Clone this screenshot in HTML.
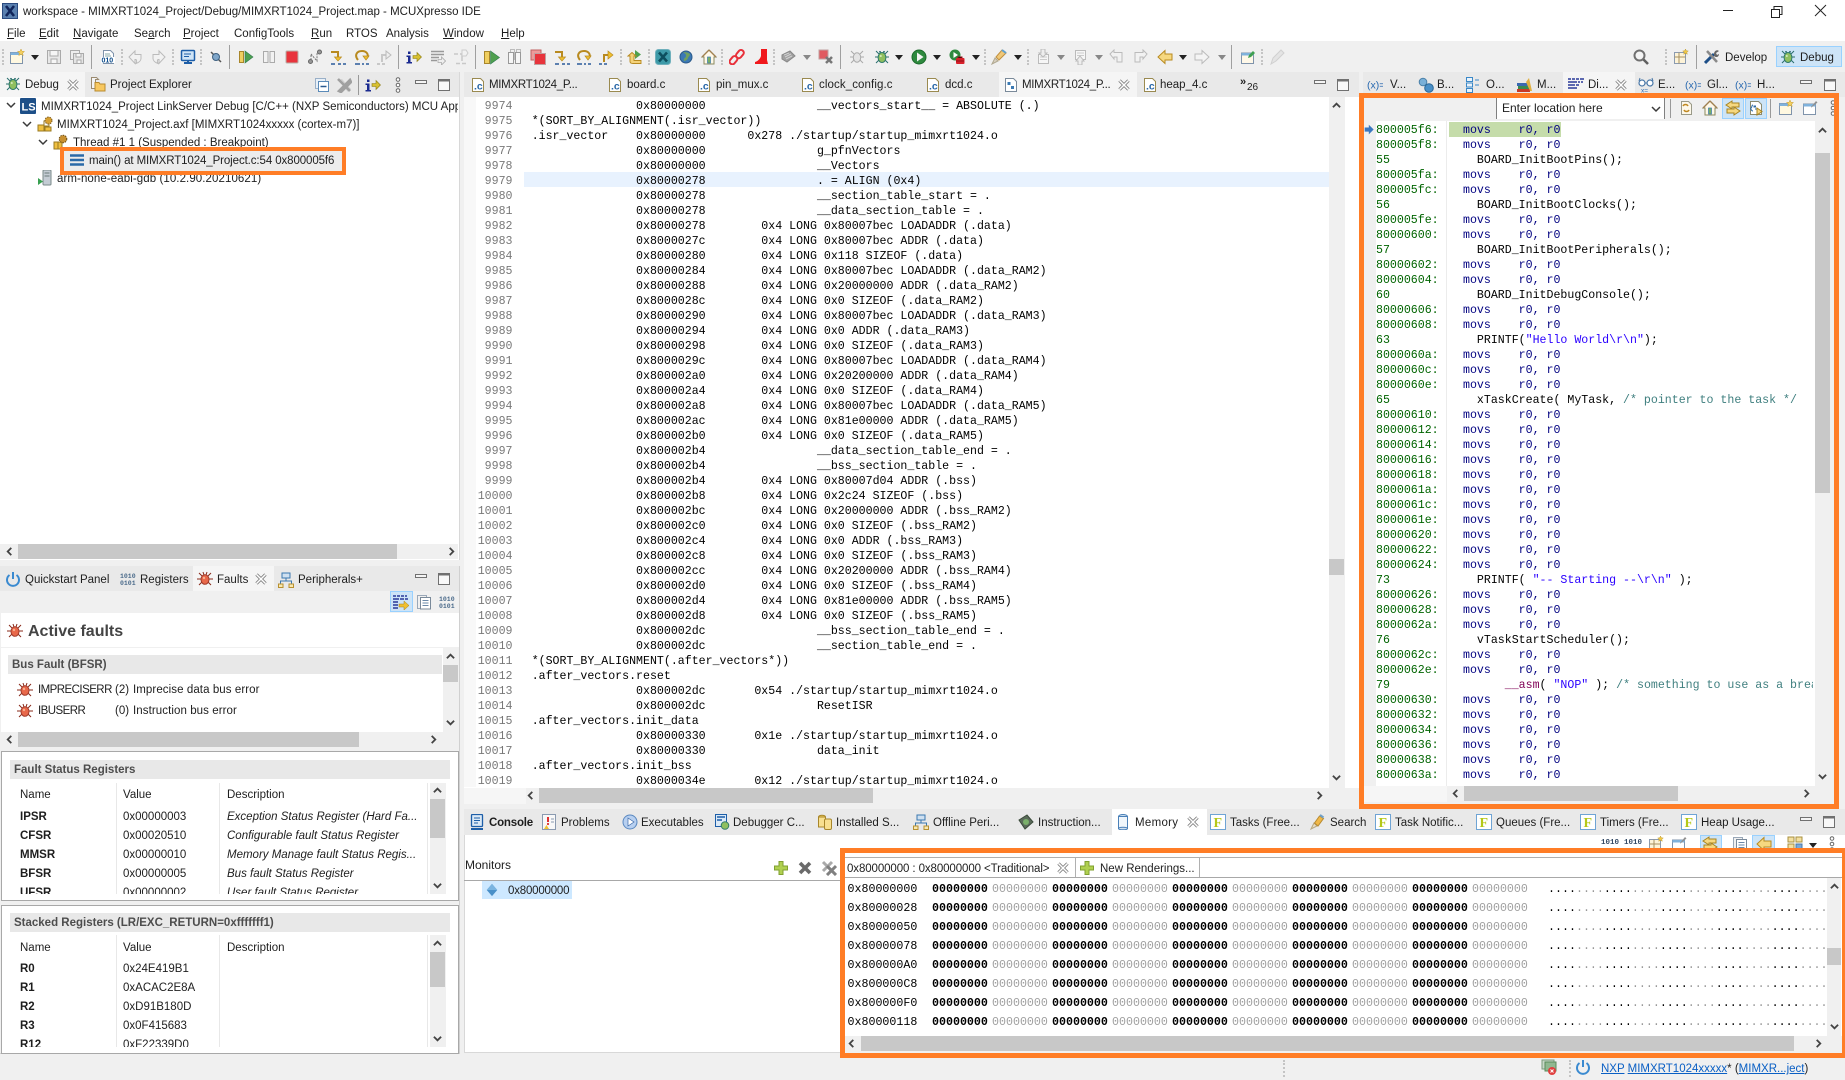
<!DOCTYPE html>
<html><head><meta charset="utf-8"><title>MCUXpresso IDE</title>
<style>
html,body{margin:0;padding:0;background:#f0f0f0}
#r{position:relative;width:1845px;height:1080px;overflow:hidden;background:#f0f0f0;font:11.5px/14px "Liberation Sans",sans-serif;color:#1e1e1e}
.a{position:absolute}
.t{position:absolute;white-space:pre;line-height:14px;margin-top:1px}
.i{position:absolute;width:16px;height:16px;overflow:visible}
.tb .i{top:49px}
.g{position:absolute;top:49px;width:0;height:16px;border-left:2px dotted #c4c4c4}
.s{position:absolute;top:45px;width:1px;height:24px;background:#a0a0a0}
.th{position:absolute;background:#c8c8c8}
pre{position:absolute;margin:0;font:11.6px/15px "Liberation Mono",monospace;white-space:pre}
.b{font-weight:bold}
.hd{position:absolute;background:#e8e8e8;color:#4d4d4d;font-weight:bold;padding:1px 0 0 4px;box-sizing:border-box;line-height:19px;white-space:pre}
.o{position:absolute;border:5px solid #ff7d26;box-sizing:border-box;z-index:20}
.mr{position:absolute;left:847.5px;height:15px;display:flex;font:11.65px/15px "Liberation Mono",monospace;white-space:pre;color:#000}
.mr i{font-style:normal;width:84.5px}
.mr b{width:60px;font-weight:bold;color:#000}
.mr u{width:60px;text-decoration:none;color:#a0a0a0}
.ti{font-style:italic}
svg text{font-family:"Liberation Sans",sans-serif}
</style></head><body><div id="r">
<svg width="0" height="0" style="position:absolute"><defs>
<symbol id="new" viewBox="0 0 16 16"><rect x="1.500" y="3.500" width="12" height="11" fill="#fff8e0" stroke="#7f93ab"/><rect x="1.500" y="3.500" width="12" height="2.500" fill="#7fb2dc"/><path d="M12 0l1 2.300 2.500.2-1.900 1.600.6 2.400L12 5.200 9.800 6.500l.6-2.400L8.500 2.500l2.500-.2z" fill="#f5d060" stroke="#c49a30" stroke-width=".5"/></symbol>
<symbol id="tri" viewBox="0 0 16 16"><path d="M4 6h8l-4 5z" fill="#222"/></symbol>
<symbol id="trig" viewBox="0 0 16 16"><path d="M4 6h8l-4 5z" fill="#888"/></symbol>
<symbol id="save" viewBox="0 0 16 16"><path d="M1.500 1.500h13v13h-13z" fill="#e8e8e8" stroke="#aaa"/><path d="M4 2v5h8V2M5 14v-4h6v4" fill="#f6f6f6" stroke="#aaa"/></symbol>
<symbol id="saveall" viewBox="0 0 16 16"><path d="M1.500 1.500h9v9h-9z" fill="#eee" stroke="#aaa"/><path d="M4.500 4.500h10v10h-10z" fill="#e4e4e4" stroke="#aaa"/><path d="M7 5v3h5V5M8 14v-3h4v3" fill="#f6f6f6" stroke="#aaa"/></symbol>
<symbol id="bin" viewBox="0 0 16 16"><path d="M3.500 1.500h7l3 3v10h-10z" fill="#fff" stroke="#7f93ab"/><path d="M5 5h5M5 7h6" stroke="#8aa" /><rect x="1" y="8" width="14" height="6" fill="#fff"/><text x="1.500" y="13.500" font-size="7" font-weight="bold" fill="#0a4a8a">010</text></symbol>
<symbol id="undo" viewBox="0 0 16 16"><path d="M1 8l6-6v3.500h6v4c0 2-2 4-5 5 1-2 1-3 0-4H7v4z" fill="#f2f2f2" stroke="#bbb"/></symbol>
<symbol id="redo" viewBox="0 0 16 16"><path d="M15 8L9 2v3.500H3v4c0 2 2 4 5 5-1-2-1-3 0-4h1v4z" fill="#f2f2f2" stroke="#bbb"/></symbol>
<symbol id="mon" viewBox="0 0 16 16"><rect x="1.500" y="1.500" width="13" height="10" rx="1" fill="#cfe4f6" stroke="#1d5ea8" stroke-width="1.500"/><path d="M4 5h7M4 7.500h5" stroke="#1d5ea8"/><path d="M4 14h8" stroke="#1d5ea8" stroke-width="2"/><path d="M7 11.500h2v2H7z" fill="#1d5ea8"/></symbol>
<symbol id="wr" viewBox="0 0 16 16"><path d="M3 3l10 10" stroke="#555" stroke-width="1.500"/><circle cx="8" cy="8" r="3.500" fill="#7fa6c9" stroke="#3c5f80"/></symbol>
<symbol id="res" viewBox="0 0 16 16"><rect x="1.500" y="2.500" width="4" height="11" fill="#f0cf60" stroke="#a8862a"/><path d="M7 2l8 6-8 6z" fill="#4fa04f" stroke="#2f7a4f" stroke-width=".6"/></symbol>
<symbol id="pau" viewBox="0 0 16 16"><rect x="2.500" y="2.500" width="4.500" height="11" fill="#f2f2f2" stroke="#aaa"/><rect x="9" y="2.500" width="4.500" height="11" fill="#f2f2f2" stroke="#aaa"/></symbol>
<symbol id="stp" viewBox="0 0 16 16"><rect x="2" y="2" width="12" height="12" rx="1" fill="#e8343c" stroke="#b8b0a8"/></symbol>
<symbol id="dis" viewBox="0 0 16 16"><circle cx="3.500" cy="12.500" r="2" fill="#999" stroke="#666"/><circle cx="12.500" cy="3" r="2" fill="#999" stroke="#666"/><path d="M4 11V5l6 7V4" fill="none" stroke="#777" stroke-dasharray="2 1"/></symbol>
<symbol id="into" viewBox="0 0 16 16"><path d="M1 3h7v7" fill="none" stroke="#b88a20" stroke-width="2"/><path d="M4.500 8l3.500 4 3.500-4z" fill="#f0c030" stroke="#b88a20" stroke-width=".7"/><path d="M1 15h4M8 15h3M13 15h3" stroke="#2a5a9a" stroke-width="1.500"/></symbol>
<symbol id="over" viewBox="0 0 16 16"><path d="M4 11C0 6 3 2 8 2s7 4 5 7" fill="none" stroke="#b88a20" stroke-width="2"/><path d="M9 7h6l-3 4z" fill="#f0c030" stroke="#b88a20" stroke-width=".7"/><path d="M1 15h5M8 15h2M12 15h3" stroke="#2a5a9a" stroke-width="1.500"/></symbol>
<symbol id="ret" viewBox="0 0 16 16"><path d="M5 13V6h5" fill="none" stroke="#c8c8c8" stroke-width="2"/><path d="M9 2l5 4-5 4z" fill="#eee" stroke="#bbb"/><path d="M0 15h3M5 15h3" stroke="#bbb" stroke-width="1.500"/></symbol>
<symbol id="ret2" viewBox="0 0 16 16"><path d="M5 13V6h5" fill="none" stroke="#b88a20" stroke-width="2"/><path d="M9 2l5 4-5 4z" fill="#f0c030" stroke="#b88a20" stroke-width=".7"/><path d="M0 15h3M5 15h3" stroke="#2a5a9a" stroke-width="1.500"/></symbol>
<symbol id="ia" viewBox="0 0 16 16"><path d="M2 2.500h2.500V5H2zM.5 6.500h4V13H6v1.500H.5V13H2V8H.5z" fill="#1a2a90"/><path d="M7 6.500h4V3.500L15.500 8 11 12.500v-3H7z" fill="#d8c030" stroke="#8a7a10" stroke-width=".6"/></symbol>
<symbol id="lin" viewBox="0 0 16 16"><path d="M1 2.500h13M1 5.500h13M1 8.500h8M1 11.500h6" stroke="#999" stroke-width="1.500"/><path d="M8 10.500h3.500V8l4 4-4 4v-2.500H8z" fill="#eee" stroke="#aaa" stroke-width=".8"/></symbol>
<symbol id="drop" viewBox="0 0 16 16"><path d="M1 5h4M7 5h2v7M3 14.500h4M9 14.500h4" stroke="#c8c8c8" stroke-width="1.500" fill="none"/><path d="M9 1h4l2 3-2 3H9z" fill="#f2f2f2" stroke="#ccc"/></symbol>
<symbol id="resa" viewBox="0 0 16 16"><rect x=".5" y="2.500" width="5" height="12" fill="#f0cf60" stroke="#a8862a"/><path d="M6.500 2l9 6.500-9 6.500z" fill="#4fa04f" stroke="#2f7a4f" stroke-width=".6"/></symbol>
<symbol id="paua" viewBox="0 0 16 16"><rect x="3.500" y=".5" width="4" height="10" fill="#eee" stroke="#bbb"/><rect x="9.500" y=".5" width="4" height="10" fill="#eee" stroke="#bbb"/><rect x="1.500" y="3.500" width="5" height="11" fill="#f6f6f6" stroke="#999"/><rect x="8.500" y="3.500" width="5" height="11" fill="#f6f6f6" stroke="#999"/></symbol>
<symbol id="stpa" viewBox="0 0 16 16"><rect x="1" y="1" width="10" height="10" fill="#ee9a9a" stroke="#c06060"/><rect x="4.500" y="4.500" width="11" height="11" fill="#e8343c" stroke="#c0a0a0"/></symbol>
<symbol id="lres" viewBox="0 0 16 16"><path d="M8 1l6 4.500-6 4.500z" fill="#4fa04f"/><path d="M3 7v5.500c0 1.500 1 2 3 2h8v-3H7V7H9L5 3.500 1 7z" fill="#f4d27a" stroke="#b88a20" stroke-width=".9"/></symbol>
<symbol id="mx" viewBox="0 0 16 16"><rect x=".5" y=".5" width="15" height="15" rx="3" fill="#3d9aa8" stroke="#6fb0bc"/><path d="M4 3.500l8 9M12 3.500l-8 9" stroke="#0d4f5e" stroke-width="2.600"/></symbol>
<symbol id="mxt" viewBox="0 0 16 16"><rect x=".5" y=".5" width="15" height="15" fill="#5a80b0" stroke="#2a4a80"/><path d="M4 3l8 10M12 3L4 13" stroke="#10245a" stroke-width="2.600"/></symbol>
<symbol id="glo" viewBox="0 0 16 16"><circle cx="8" cy="8" r="6" fill="#3c78b4" stroke="#2a5a8a"/><path d="M5 4c2 0 3 1 3 3S5 9 6 12c2 0 4-2 4-3s2-2 2-4c-2-1-5-3-7-1z" fill="#6fa060"/></symbol>
<symbol id="hom" viewBox="0 0 16 16"><path d="M8 1L1 8h2v7h10V8h2z" fill="#fff8e8" stroke="#8a8a60"/><path d="M8 1L1 8M8 1l7 7" stroke="#a08050" stroke-width="1.300"/><rect x="6.500" y="8" width="3" height="6" fill="#7ab060" stroke="#3a7ab4" stroke-width=".7"/></symbol>
<symbol id="lnk" viewBox="0 0 16 16"><g fill="none" stroke="#e8303a" stroke-width="2"><rect x="8" y="0" width="5.500" height="9" rx="2.700" transform="rotate(40 10 5)"/><rect x="2" y="7" width="5.500" height="9" rx="2.700" transform="rotate(40 5 11)"/></g></symbol>
<symbol id="boot" viewBox="0 0 16 16"><path d="M8 0h6v11l1 4H2v-2c3-1 5-3 6-6z" fill="#f0181c"/></symbol>
<symbol id="chip" viewBox="0 0 16 16"><path d="M2 6l8-4 5 5-8 6-5-3z" fill="#a0a0a0" stroke="#888"/><path d="M4 6l5-2M5 8l6-3M6 10l6-3" stroke="#d0d0d0"/></symbol>
<symbol id="rx" viewBox="0 0 16 16"><rect x="1" y="1" width="9" height="9" fill="#e05a60" stroke="#c0a0a0"/><path d="M8 8l6 6M14 8l-6 6" stroke="#777" stroke-width="2.500"/></symbol>
<symbol id="bugg" viewBox="0 0 16 16"><path d="M2 2l3 3M14 2l-3 3M1 8h3M15 8h-3M2 14l3-3M14 14l-3-3" stroke="#aaa"/><ellipse cx="8" cy="8.500" rx="3.700" ry="4.700" fill="#e4e4e4" stroke="#aaa"/></symbol>
<symbol id="bug" viewBox="0 0 16 16"><path d="M2 2l3 3M14 2l-3 3M1 8h3M15 8h-3M2 14l3-3M14 14l-3-3" stroke="#2a6e6e"/><ellipse cx="8" cy="8.500" rx="3.900" ry="5" fill="#8fbf5f" stroke="#2f7a6a"/><circle cx="6.800" cy="7" r="1" fill="#d8ecc0"/><circle cx="6" cy="2.800" r=".9" fill="#2a6e6e"/><circle cx="10" cy="2.800" r=".9" fill="#2a6e6e"/></symbol>
<symbol id="bugr" viewBox="0 0 16 16"><path d="M2 2l3 3M14 2l-3 3M0 8h4M16 8h-4M2 14l3-3M14 14l-3-3M6 1l1 3M10 1L9 4" stroke="#8a2a1a"/><ellipse cx="8" cy="8.500" rx="4" ry="4.800" fill="#e8684a" stroke="#a03a2a"/><circle cx="7" cy="7" r="1.200" fill="#f5b090"/></symbol>
<symbol id="run" viewBox="0 0 16 16"><circle cx="8" cy="8" r="7" fill="#2f8a3f" stroke="#1a6a2a"/><path d="M6 3.500L12.500 8 6 12.500z" fill="#f4f4f4"/></symbol>
<symbol id="runb" viewBox="0 0 16 16"><circle cx="6" cy="6" r="5.500" fill="#2f8a3f"/><path d="M4.500 3L9 6 4.500 9z" fill="#fff"/><rect x="7" y="9" width="8.500" height="6" rx="1" fill="#d8202a"/><path d="M9 9V8h4v1M7 12h8" stroke="#901018"/></symbol>
<symbol id="bru" viewBox="0 0 16 16"><path d="M1 15l3-6 3 3z" fill="#d8d0c0" stroke="#b0a890"/><path d="M5 8l6-7 4 3-7 7z" fill="#f0c878" stroke="#c09040"/><path d="M11 1l4 3" stroke="#60a0d0" stroke-width="2"/></symbol>
<symbol id="nv1" viewBox="0 0 16 16"><path d="M3.500 5.500h10v9h-10z" fill="#f6f6f6" stroke="#bbb"/><path d="M5 8h7M5 10.500h7" stroke="#ccc"/><path d="M6 0h4v4h2L8 8 4 4h2z" fill="#eee" stroke="#bbb"/></symbol>
<symbol id="nv2" viewBox="0 0 16 16"><path d="M3.500 1.500h10v9h-10z" fill="#f6f6f6" stroke="#bbb"/><path d="M5 4h7M5 6.500h7" stroke="#ccc"/><path d="M6 16v-4H4l4-5 4 5h-2v4z" fill="#eee" stroke="#bbb"/></symbol>
<symbol id="lbk" viewBox="0 0 16 16"><path d="M1 5l4-4v2.500h8V13H8v-5H5v2z" fill="#f2f2f2" stroke="#bbb"/></symbol>
<symbol id="lfw" viewBox="0 0 16 16"><path d="M15 5l-4-4v2.500H3V13h5V8h3v2z" fill="#f2f2f2" stroke="#bbb"/></symbol>
<symbol id="ybk" viewBox="0 0 16 16"><path d="M1 8l7-6.500V5h7v6H8v3.500z" fill="#f6d880" stroke="#b88a20"/></symbol>
<symbol id="gfw" viewBox="0 0 16 16"><path d="M15 8L8 1.500V5H1v6h7v3.500z" fill="#f4f4f4" stroke="#bbb"/></symbol>
<symbol id="nbx" viewBox="0 0 16 16"><rect x="1.500" y="4" width="12" height="10.500" fill="#fff8e8" stroke="#7f93ab"/><rect x="1.500" y="4" width="12" height="2.500" fill="#7fb2dc"/><path d="M9 6l4-4 2 2-4 4-3 1z" fill="#3fa050"/></symbol>
<symbol id="pen" viewBox="0 0 16 16"><path d="M2 15l2-6 8-8 3 3-8 8z" fill="#e4e4e4" stroke="#d0d0d0"/></symbol>
<symbol id="sea" viewBox="0 0 16 16"><circle cx="6.500" cy="6.500" r="5" fill="#f4f4f4" stroke="#707070" stroke-width="2"/><path d="M10.500 10.500l4.500 4.500" stroke="#606060" stroke-width="2.600"/></symbol>
<symbol id="per" viewBox="0 0 16 16"><rect x="1.500" y="3.500" width="11" height="11" fill="#fdf3d8" stroke="#8a9ab0"/><path d="M1.500 8h11M6 3.500v11" stroke="#a89060"/><path d="M12.500 0l.8 1.800 2 .2-1.500 1.300.5 2-1.800-1-1.800 1 .5-2L9.700 2l2-.2z" fill="#f0c848" stroke="#b89020" stroke-width=".4"/></symbol>
<symbol id="too" viewBox="0 0 16 16"><path d="M1 14l9-9" stroke="#1d4f88" stroke-width="3"/><path d="M3 2l10 11" stroke="#8a8a8a" stroke-width="2.500"/><path d="M10 5c0-3 3-5 5-3l-3 2 1 2 2-1c0 3-3 4-5 2z" fill="#666"/></symbol>
<symbol id="cf" viewBox="0 0 16 16"><path d="M2.500 1.500h8l3 3v10h-11z" fill="#fff" stroke="#9a8a50"/><text x="4" y="12.500" font-size="10.500" font-weight="bold" fill="#2a68a8">.c</text></symbol>
<symbol id="mp" viewBox="0 0 16 16"><path d="M2.500 1.500h8l3 3v10h-11z" fill="#fff" stroke="#7a8a9a"/><rect x="4.500" y="5" width="3" height="3" fill="#3a7ab4"/><rect x="8" y="9" width="3" height="3" fill="#3a7ab4"/></symbol>
<symbol id="cx" viewBox="0 0 16 16"><path d="M3.500 3.500l9 9M12.500 3.500l-9 9" stroke="#808080" stroke-width="3.200"/><path d="M3.500 3.500l9 9M12.500 3.500l-9 9" stroke="#fff" stroke-width="1.500"/></symbol>
<symbol id="min" viewBox="0 0 16 16"><rect x="2.500" y="3.500" width="11" height="3" fill="#f4f4f4" stroke="#707070"/></symbol>
<symbol id="max" viewBox="0 0 16 16"><rect x="2.500" y="2.500" width="11" height="11" fill="#f8f8f8" stroke="#707070"/><path d="M2.500 3.500h11" stroke="#707070" stroke-width="2"/></symbol>
<symbol id="pe" viewBox="0 0 16 16"><path d="M1.500 1.500h5l2 2h-3v9h-4z" fill="#f4f4f4" stroke="#9a8a70"/><path d="M5 6.500h4l1 1.500h5v7H5z" fill="#f8c860" stroke="#b88a30"/></symbol>
<symbol id="col" viewBox="0 0 16 16"><rect x="1.500" y="1.500" width="10" height="10" fill="#e8f0f8" stroke="#9ab0c8"/><rect x="4.500" y="4.500" width="10" height="10" fill="#fff" stroke="#5a8ab8"/><path d="M6.500 9.500h6" stroke="#2a5a90" stroke-width="1.500"/></symbol>
<symbol id="xg" viewBox="0 0 16 16"><path d="M2 3l4-1 9 10-3 3z" fill="#d0d0d0"/><path d="M3 14L14 3l1 2-10 10zM2 2l12 12" stroke="#a0a0a0" stroke-width="2.600"/></symbol>
<symbol id="dots" viewBox="0 0 16 16"><g fill="#fff" stroke="#666"><circle cx="8" cy="2.500" r="1.800"/><circle cx="8" cy="8" r="1.800"/><circle cx="8" cy="13.500" r="1.800"/></g></symbol>
<symbol id="up" viewBox="0 0 10 10"><path d="M1 7l4-4 4 4" fill="none" stroke="#444" stroke-width="2"/></symbol>
<symbol id="dn" viewBox="0 0 10 10"><path d="M1 3l4 4 4-4" fill="none" stroke="#444" stroke-width="2"/></symbol>
<symbol id="lf" viewBox="0 0 10 10"><path d="M7 1L3 5l4 4" fill="none" stroke="#444" stroke-width="2"/></symbol>
<symbol id="rt" viewBox="0 0 10 10"><path d="M3 1l4 4-4 4" fill="none" stroke="#444" stroke-width="2"/></symbol>
<symbol id="tv" viewBox="0 0 10 10"><path d="M1 3l4 4 4-4" fill="none" stroke="#3a3a3a" stroke-width="1.500"/></symbol>
<symbol id="ls" viewBox="0 0 16 16"><rect width="16" height="16" rx="1" fill="#1d4f88"/><text x="1.500" y="12.500" font-size="11" font-weight="bold" fill="#fff">LS</text></symbol>
<symbol id="axf" viewBox="0 0 16 16"><rect x="1" y="9" width="6" height="6" fill="#f0c040" stroke="#9a7a20"/><rect x="7" y="5" width="5" height="5" fill="#fff" stroke="#9a7a20"/><circle cx="11.500" cy="4.500" r="3.500" fill="#d8a030" stroke="#7a5a20" stroke-dasharray="1.500 1"/><path d="M8 11h6v4H8z" fill="#f0c040" stroke="#9a7a20"/></symbol>
<symbol id="thr" viewBox="0 0 16 16"><rect x="1" y="8" width="4" height="7" fill="#f0c040" stroke="#9a7a20"/><rect x="5" y="8" width="4" height="7" fill="#f0c040" stroke="#9a7a20"/><circle cx="10" cy="5" r="3.800" fill="#c89030" stroke="#6a4a10" stroke-dasharray="1.500 1"/></symbol>
<symbol id="frm" viewBox="0 0 16 16"><path d="M1 3.500h14M1 8h14M1 12.500h14" stroke="#2a6aa8" stroke-width="2.600"/></symbol>
<symbol id="gdb" viewBox="0 0 16 16"><rect x="6" y="0" width="8" height="15" rx="1" fill="#c4ccd4" stroke="#7a8a8a"/><path d="M7.500 3h5M7.500 6h5" stroke="#6a7a7a"/><path d="M1 8l5 3.500L1 15z" fill="#38a050"/></symbol>
<symbol id="qs" viewBox="0 0 16 16"><path d="M4.500 4a6 6 0 1 0 7 0" fill="none" stroke="#3a8ad0" stroke-width="2"/><path d="M8 1v7" stroke="#3a8ad0" stroke-width="2"/></symbol>
<symbol id="bb" viewBox="0 0 16 16"><text x="0" y="7" font-size="6.500" font-weight="bold" fill="#4a6a8a" style="font-family:'Liberation Mono',monospace">1010</text><text x="0" y="14" font-size="6.500" font-weight="bold" fill="#4a6a8a" style="font-family:'Liberation Mono',monospace">0101</text></symbol>
<symbol id="per2" viewBox="0 0 16 16"><rect x="4" y="1" width="8" height="5" fill="#cfe0f0" stroke="#3a78b0"/><path d="M8 6v3M2.500 12V9h11v3" fill="none" stroke="#3a78b0"/><rect x=".5" y="12" width="4.500" height="3.500" fill="#f8e8b0" stroke="#b89030"/><rect x="11" y="12" width="4.500" height="3.500" fill="#f8e8b0" stroke="#b89030"/></symbol>
<symbol id="dsa" viewBox="0 0 16 16"><path d="M0 2h3M4 2h3M8 2h3M12 2h2M0 5h6M7 5h4M12 5h3M0 8h5M0 11h5M0 14h5" stroke="#2a3a9a" stroke-width="1.500"/><path d="M6 10h5V7l5 4.500L11 16v-3H6z" fill="#f0c030" stroke="#a08020" stroke-width=".5"/></symbol>
<symbol id="dsb" viewBox="0 0 16 16"><path d="M0 2h3M4 2h3M8 2h3M12 2h2M14 2h2M0 5h9M10 5h2M13 5h2M0 8h7M8 8h3M0 11h9" stroke="#2a3a9a" stroke-width="1.600"/></symbol>
<symbol id="clp" viewBox="0 0 16 16"><rect x="1.500" y="1.500" width="9" height="13" fill="#f0f0f0" stroke="#9aa8b8"/><rect x="4.500" y="3.500" width="10" height="11.500" fill="#fff" stroke="#7a8a9a"/><path d="M6.500 6.500h6M6.500 9h6M6.500 11.500h6" stroke="#6a88a8"/></symbol>
<symbol id="vr" viewBox="0 0 16 16"><text x="0" y="11.500" font-size="10.500" fill="#2a6ab0">(x)=</text></symbol>
<symbol id="bp" viewBox="0 0 16 16"><circle cx="5" cy="5" r="3.800" fill="#7ab0d8" stroke="#4a80a8"/><circle cx="11" cy="11" r="4.300" fill="#4a90c8" stroke="#2a6898"/></symbol>
<symbol id="ol" viewBox="0 0 16 16"><g fill="#eaf3fb" stroke="#3a88c8"><rect x="1.500" y=".5" width="6" height="4"/><rect x="1.500" y="6" width="6" height="4"/><rect x="1.500" y="11.500" width="6" height="4"/></g><path d="M10 8h4M10 3h4" stroke="#3a88c8"/></symbol>
<symbol id="mod" viewBox="0 0 16 16"><rect x="0" y="12" width="13" height="3" fill="#c83a28"/><rect x="1" y="9" width="12" height="3" fill="#3a8a50"/><rect x="0" y="6" width="11" height="3" fill="#3a68b0"/><path d="M9 5l3-4 3 13h-2z" fill="#e0b040"/></symbol>
<symbol id="exp" viewBox="0 0 16 16"><circle cx="4" cy="6" r="3" fill="#fff" stroke="#4a78a8" stroke-width="1.200"/><circle cx="12" cy="6" r="3" fill="#fff" stroke="#4a78a8" stroke-width="1.200"/><path d="M7 6h2M1 4l1-3M15 4l-1-3" stroke="#4a78a8"/><text x="3" y="15.500" font-size="6.500" fill="#2a6ab0">x=</text></symbol>
<symbol id="con" viewBox="0 0 16 16"><rect x="2.500" y=".5" width="11" height="12" rx="1" fill="#dbe9f6" stroke="#1d5ea8" stroke-width="1.300"/><path d="M5 4h6M5 6.500h6M5 9h4" stroke="#1d5ea8"/><path d="M2 15h12" stroke="#1d5ea8" stroke-width="2"/></symbol>
<symbol id="prb" viewBox="0 0 16 16"><rect x="1.500" y=".5" width="13" height="15" fill="#f8f8f8" stroke="#8a9ab0"/><path d="M6 3h2v5H6z" fill="#e03030"/><circle cx="7" cy="10" r="1.100" fill="#e03030"/><path d="M3 15l2.500-4 2.500 4z" fill="#f0c030"/><path d="M10 5h3M10 8h3" stroke="#8a9ab0"/></symbol>
<symbol id="exe" viewBox="0 0 16 16"><circle cx="8" cy="8" r="7" fill="#b8d0f0" stroke="#5a88c0"/><path d="M6 4l6 4-6 4z" fill="#fff" stroke="#3a68a8" stroke-width=".7"/></symbol>
<symbol id="dbc" viewBox="0 0 16 16"><rect x="1.500" y=".5" width="11" height="12" fill="#dbe9f6" stroke="#1d5ea8"/><path d="M3 3h8M3 6h5" stroke="#1d5ea8" stroke-width="1.400"/><circle cx="11" cy="11.500" r="3.800" fill="#8fbf5f" stroke="#2f7a6a"/></symbol>
<symbol id="ins" viewBox="0 0 16 16"><ellipse cx="5" cy="3" rx="3.500" ry="1.800" fill="#f0d060" stroke="#a8862a"/><rect x="1.500" y="3" width="7" height="10" fill="#f8e090" stroke="#a8862a"/><rect x="7.500" y="5" width="7" height="10.500" rx="1.500" fill="#f8e090" stroke="#a8862a"/></symbol>
<symbol id="ist" viewBox="0 0 16 16"><path d="M1 6l8-5 6 7-8 7z" fill="#5a6a5a" stroke="#3a4a3a"/><circle cx="8" cy="8" r="3" fill="#7ab06a"/></symbol>
<symbol id="mem" viewBox="0 0 16 16"><ellipse cx="8" cy="2.500" rx="4.500" ry="2" fill="#cfe0f0" stroke="#4a80b8"/><rect x="3.500" y="2.500" width="9" height="12" fill="#f0f6fb" stroke="#4a80b8"/><ellipse cx="8" cy="14.500" rx="4.500" ry="1.300" fill="#cfe0f0" stroke="#4a80b8"/></symbol>
<symbol id="ff" viewBox="0 0 16 16"><rect x=".5" y=".5" width="15" height="15" fill="#fff" stroke="#6fa4d4"/><text x="3.500" y="13" font-size="14" font-weight="bold" fill="#b4c818" style="font-family:'Liberation Serif',serif">F</text></symbol>
<symbol id="srh" viewBox="0 0 16 16"><path d="M1 15l3-6 3 3z" fill="#eadfc8" stroke="#b8a880"/><path d="M4.500 9l5-7 4 2.500L8 12z" fill="#f0b848" stroke="#b88a30"/><path d="M10 1l3.500 2.500" stroke="#70a0c8" stroke-width="2"/></symbol>
<symbol id="plus" viewBox="0 0 16 16"><path d="M6 1.500h4V6h4.500v4H10v4.500H6V10H1.500V6H6z" fill="#b0d050" stroke="#80a030"/></symbol>
<symbol id="xx" viewBox="0 0 16 16"><path d="M3 3l10 10M13 3L3 13" stroke="#6a6a6a" stroke-width="3.600"/></symbol>
<symbol id="xx2" viewBox="0 0 16 16"><path d="M2 2l9 9M11 2l-9 9" stroke="#aaa" stroke-width="3"/><path d="M6 6l9 9M15 6l-9 9" stroke="#808080" stroke-width="3"/></symbol>
<symbol id="dia" viewBox="0 0 16 16"><path d="M8 1l6 7-6 7-6-7z" fill="#4a90c8"/><path d="M8 1l6 7H2z" fill="#7ab4e0"/></symbol>
<symbol id="arr" viewBox="0 0 16 16"><path d="M1 5h6V1l7 7-7 7v-4H1z" fill="#3a78c0"/></symbol>
<symbol id="sync" viewBox="0 0 16 16"><path d="M3.500 1.500h7l3 3v10h-10z" fill="#fdf8ea" stroke="#9a9a88"/><path d="M5 6c1-2 4-2 5 0M11 10c-1 2-4 2-5 0" fill="none" stroke="#c08820" stroke-width="1.500"/></symbol>
<symbol id="swp" viewBox="0 0 16 16"><path d="M7 1L1 5l6 4V7h7V3H7z" fill="#f6d880" stroke="#a88420"/><path d="M9 7l6 4-6 4v-2H2V9h7z" fill="#f6d880" stroke="#a88420"/></symbol>
<symbol id="sd" viewBox="0 0 16 16"><path d="M2.500 1.500h8l3 3v10h-11z" fill="#fff" stroke="#8a8a70"/><path d="M5 5c-1.500 0-1 3-2 3s.5 3 2 3M8 6H6v1h2M7 9h3" fill="none" stroke="#2a6aa8"/><path d="M9 8l5 3.500L9 15z" fill="#f6d880" stroke="#a88420"/></symbol>
<symbol id="pin" viewBox="0 0 16 16"><rect x="1.500" y="4" width="12" height="10.500" fill="#fff" stroke="#7f93ab"/><rect x="1.500" y="4" width="12" height="2.500" fill="#7fb2dc"/><path d="M9 7l5-6 1.500 1.500-6 5z" fill="#909090"/></symbol>
<symbol id="stk" viewBox="0 0 16 16"><rect x="1" y="1" width="6" height="5" fill="#f4e0a0" stroke="#a89040"/><rect x="9" y="1" width="6" height="5" fill="#f4e0a0" stroke="#a89040"/><rect x="1" y="8" width="6" height="5" fill="#f4e0a0" stroke="#a89040"/><rect x="9" y="8" width="6" height="7" fill="#7aa8d8" stroke="#4a78a8"/></symbol>
<symbol id="st" viewBox="0 0 16 16"><rect x="1" y="1" width="12" height="9" fill="#c8d8c8" stroke="#7a9a7a"/><rect x="4" y="3" width="11" height="9" fill="#90b890" stroke="#5a8a5a"/><circle cx="11" cy="12" r="4" fill="#e04040"/><path d="M9.500 10.500l3 3M12.500 10.500l-3 3" stroke="#fff"/></symbol>
</defs></svg>

<!-- title -->
<div class="a" style="left:0;top:0;width:1845px;height:41px;background:#fff"></div>
<svg class="i" style="left:2px;top:3px;width:16px;height:16px"><use href="#mxt"/></svg>
<div class="t" style="left:23px;top:4px">workspace - MIMXRT1024_Project/Debug/MIMXRT1024_Project.map - MCUXpresso IDE</div>
<div class="a" style="left:1723px;top:10px;width:10px;height:1px;background:#222"></div>
<svg class="i" style="left:1768px;top:3px"><path d="M3.500 6.500h8v8h-8zM6 6V3.500h8v8h-3" fill="none" stroke="#222"/></svg>
<svg class="i" style="left:1812px;top:2px"><path d="M3 3l11 11M14 3L3 14" stroke="#222"/></svg>
<div class="t" style="left:7px;top:26px"><u>F</u>ile</div>
<div class="t" style="left:39px;top:26px"><u>E</u>dit</div>
<div class="t" style="left:73px;top:26px"><u>N</u>avigate</div>
<div class="t" style="left:134px;top:26px">Se<u>a</u>rch</div>
<div class="t" style="left:183px;top:26px"><u>P</u>roject</div>
<div class="t" style="left:234px;top:26px">ConfigTools</div>
<div class="t" style="left:311px;top:26px"><u>R</u>un</div>
<div class="t" style="left:346px;top:26px">RTOS</div>
<div class="t" style="left:386px;top:26px">Analysis</div>
<div class="t" style="left:443px;top:26px"><u>W</u>indow</div>
<div class="t" style="left:501px;top:26px"><u>H</u>elp</div>

<!-- toolbar -->
<div class="tb">
<div class="g" style="left:2px"></div>
<svg class="i" style="left:9px"><use href="#new"/></svg><svg class="i" style="left:27px"><use href="#tri"/></svg>
<svg class="i" style="left:46px"><use href="#save"/></svg><svg class="i" style="left:69px"><use href="#saveall"/></svg>
<div class="s" style="left:91px"></div>
<svg class="i" style="left:100px"><use href="#bin"/></svg><div class="g" style="left:121px"></div>
<svg class="i" style="left:128px"><use href="#undo"/></svg><svg class="i" style="left:150px"><use href="#redo"/></svg>
<div class="g" style="left:172px"></div>
<svg class="i" style="left:180px"><use href="#mon"/></svg><div class="g" style="left:200px"></div>
<svg class="i" style="left:208px"><use href="#wr"/></svg><div class="s" style="left:229px"></div>
<svg class="i" style="left:238px"><use href="#res"/></svg><svg class="i" style="left:261px"><use href="#pau"/></svg><svg class="i" style="left:284px"><use href="#stp"/></svg><svg class="i" style="left:307px"><use href="#dis"/></svg><svg class="i" style="left:330px"><use href="#into"/></svg><svg class="i" style="left:354px"><use href="#over"/></svg><svg class="i" style="left:377px"><use href="#ret"/></svg>
<div class="s" style="left:398px"></div>
<svg class="i" style="left:406px"><use href="#ia"/></svg><svg class="i" style="left:430px"><use href="#lin"/></svg><svg class="i" style="left:453px"><use href="#drop"/></svg>
<div class="s" style="left:475px"></div>
<svg class="i" style="left:484px"><use href="#resa"/></svg><svg class="i" style="left:507px"><use href="#paua"/></svg><svg class="i" style="left:530px"><use href="#stpa"/></svg><svg class="i" style="left:554px"><use href="#into"/></svg><svg class="i" style="left:576px"><use href="#over"/></svg><svg class="i" style="left:599px"><use href="#ret2"/></svg>
<div class="g" style="left:620px"></div><svg class="i" style="left:627px"><use href="#lres"/></svg><div class="g" style="left:648px"></div>
<svg class="i" style="left:655px"><use href="#mx"/></svg><svg class="i" style="left:678px"><use href="#glo"/></svg><svg class="i" style="left:701px"><use href="#hom"/></svg>
<div class="g" style="left:721px"></div><svg class="i" style="left:729px"><use href="#lnk"/></svg><svg class="i" style="left:753px"><use href="#boot"/></svg><div class="g" style="left:773px"></div>
<svg class="i" style="left:780px"><use href="#chip"/></svg><svg class="i" style="left:799px"><use href="#trig"/></svg><svg class="i" style="left:818px"><use href="#rx"/></svg>
<div class="s" style="left:840px"></div>
<svg class="i" style="left:849px"><use href="#bugg"/></svg><svg class="i" style="left:874px"><use href="#bug"/></svg><svg class="i" style="left:891px"><use href="#tri"/></svg><svg class="i" style="left:911px"><use href="#run"/></svg><svg class="i" style="left:929px"><use href="#tri"/></svg><svg class="i" style="left:949px"><use href="#runb"/></svg><svg class="i" style="left:968px"><use href="#tri"/></svg>
<div class="g" style="left:984px"></div><svg class="i" style="left:991px"><use href="#bru"/></svg><svg class="i" style="left:1010px"><use href="#tri"/></svg><div class="g" style="left:1027px"></div>
<svg class="i" style="left:1035px"><use href="#nv1"/></svg><svg class="i" style="left:1053px"><use href="#trig"/></svg><svg class="i" style="left:1072px"><use href="#nv2"/></svg><svg class="i" style="left:1091px"><use href="#trig"/></svg>
<svg class="i" style="left:1109px"><use href="#lbk"/></svg><svg class="i" style="left:1132px"><use href="#lfw"/></svg><svg class="i" style="left:1157px"><use href="#ybk"/></svg><svg class="i" style="left:1175px"><use href="#tri"/></svg><svg class="i" style="left:1194px"><use href="#gfw"/></svg><svg class="i" style="left:1214px"><use href="#trig"/></svg>
<div class="s" style="left:1231px"></div><svg class="i" style="left:1240px"><use href="#nbx"/></svg><div class="g" style="left:1261px"></div><svg class="i" style="left:1269px"><use href="#pen"/></svg>
<svg class="i" style="left:1633px"><use href="#sea"/></svg><div class="g" style="left:1665px"></div><svg class="i" style="left:1673px"><use href="#per"/></svg><div class="s" style="left:1696px"></div>
<svg class="i" style="left:1704px"><use href="#too"/></svg>
<div class="t" style="left:1725px;top:50px">Develop</div>
<div class="a" style="left:1776px;top:46px;width:66px;height:21px;background:#cde4f7;border:1px solid #99d1ff;box-sizing:border-box"></div>
<svg class="i" style="left:1780px"><use href="#bug"/></svg>
<div class="t" style="left:1800px;top:50px">Debug</div>
</div>

<!-- debug panel -->
<div class="a" style="left:0;top:72px;width:459px;height:488px;background:#fff;border-right:1px solid #d8d8d8"></div>
<div class="a" style="left:0;top:72px;width:459px;height:25px;background:#e9e9e9"></div>
<div class="a" style="left:0;top:72px;width:85px;height:25px;background:#f5f5f5"></div>
<svg class="i" style="left:5px;top:76px"><use href="#bug"/></svg><div class="t" style="left:25px;top:77px">Debug</div><svg class="i" style="left:65px;top:77px"><use href="#cx"/></svg>
<svg class="i" style="left:90px;top:76px"><use href="#pe"/></svg><div class="t" style="left:110px;top:77px">Project Explorer</div>
<svg class="i" style="left:314px;top:77px"><use href="#col"/></svg><svg class="i" style="left:336px;top:77px"><use href="#xg"/></svg><div class="a" style="left:358px;top:75px;width:1px;height:20px;background:#999"></div><svg class="i" style="left:365px;top:77px"><use href="#ia"/></svg><svg class="i" style="left:390px;top:77px"><use href="#dots"/></svg><svg class="i" style="left:413px;top:77px"><use href="#min"/></svg><svg class="i" style="left:436px;top:77px"><use href="#max"/></svg>
<svg class="i" style="left:6px;top:100px;width:10px;height:10px"><use href="#tv"/></svg><svg class="i" style="left:20px;top:98px"><use href="#ls"/></svg><div class="a" style="left:0;top:97px;width:458px;height:20px;overflow:hidden"><div class="t" style="left:41px;top:2px">MIMXRT1024_Project LinkServer Debug [C/C++ (NXP Semiconductors) MCU Application]</div></div>
<svg class="i" style="left:22px;top:119px;width:10px;height:10px"><use href="#tv"/></svg><svg class="i" style="left:37px;top:116px"><use href="#axf"/></svg><div class="t" style="left:57px;top:117px">MIMXRT1024_Project.axf [MIMXRT1024xxxxx (cortex-m7)]</div>
<svg class="i" style="left:38px;top:137px;width:10px;height:10px"><use href="#tv"/></svg><svg class="i" style="left:53px;top:134px"><use href="#thr"/></svg><div class="t" style="left:73px;top:135px">Thread #1 1 (Suspended : Breakpoint)</div>
<div class="a" style="left:64px;top:151px;width:278px;height:20px;background:#ececec"></div>
<svg class="i" style="left:69px;top:152px"><use href="#frm"/></svg><div class="t" style="left:89px;top:153px;letter-spacing:-.1px">main() at MIMXRT1024_Project.c:54 0x800005f6</div>
<svg class="i" style="left:37px;top:170px"><use href="#gdb"/></svg><div class="t" style="left:57px;top:171px;letter-spacing:.08px">arm-none-eabi-gdb (10.2.90.20210621)</div>
<div class="a" style="left:0;top:544px;width:458px;height:15px;background:#f0f0f0"></div>
<div class="th" style="left:18px;top:544px;width:379px;height:15px"></div>
<svg class="i" style="left:5px;top:547px;width:9px;height:9px"><use href="#lf"/></svg><svg class="i" style="left:447px;top:547px;width:9px;height:9px"><use href="#rt"/></svg>
<div class="o" style="left:60px;top:147px;width:286px;height:28px;border-width:4px"></div>

<!-- faults panel -->
<div class="a" style="left:0;top:566px;width:459px;height:487px;background:#f0f0f0;border-right:1px solid #d0d0d0;border-bottom:1px solid #d0d0d0"></div>
<div class="a" style="left:0;top:566px;width:459px;height:25px;background:#e9e9e9"></div>
<div class="a" style="left:193px;top:566px;width:81px;height:25px;background:#f5f5f5"></div>
<svg class="i" style="left:5px;top:571px"><use href="#qs"/></svg><div class="t" style="left:25px;top:572px">Quickstart Panel</div>
<svg class="i" style="left:120px;top:571px"><use href="#bb"/></svg><div class="t" style="left:140px;top:572px">Registers</div>
<svg class="i" style="left:197px;top:571px"><use href="#bugr"/></svg><div class="t" style="left:217px;top:572px">Faults</div><svg class="i" style="left:253px;top:571px"><use href="#cx"/></svg>
<svg class="i" style="left:278px;top:572px"><use href="#per2"/></svg><div class="t" style="left:298px;top:572px">Peripherals+</div>
<svg class="i" style="left:413px;top:571px"><use href="#min"/></svg><svg class="i" style="left:436px;top:571px"><use href="#max"/></svg>
<div class="a" style="left:390px;top:591px;width:23px;height:21px;background:#cde4f7;border:1px solid #99d1ff;box-sizing:border-box"></div>
<svg class="i" style="left:393px;top:594px"><use href="#dsa"/></svg><svg class="i" style="left:416px;top:594px"><use href="#clp"/></svg><svg class="i" style="left:439px;top:594px"><use href="#bb"/></svg>
<div class="a" style="left:1px;top:613px;width:458px;height:34px;background:#fff"></div>
<svg class="i" style="left:7px;top:623px"><use href="#bugr"/></svg>
<div class="t b" style="left:28px;top:622px;font-size:16px;line-height:18px;color:#444">Active faults</div>
<div class="a" style="left:1px;top:648px;width:442px;height:84px;background:#fff"></div>
<div class="hd" style="left:8px;top:655px;width:434px;height:19px">Bus Fault (BFSR)</div>
<svg class="i" style="left:17px;top:682px"><use href="#bugr"/></svg><div class="t" style="left:38px;top:682px;letter-spacing:-.55px">IMPRECISERR</div><div class="t" style="left:115px;top:682px">(2)</div><div class="t" style="left:133px;top:682px;letter-spacing:.08px">Imprecise data bus error</div>
<svg class="i" style="left:17px;top:703px"><use href="#bugr"/></svg><div class="t" style="left:38px;top:703px;letter-spacing:-.55px">IBUSERR</div><div class="t" style="left:115px;top:703px">(0)</div><div class="t" style="left:133px;top:703px;letter-spacing:.08px">Instruction bus error</div>
<svg class="i" style="left:446px;top:652px;width:9px;height:9px"><use href="#up"/></svg><div class="th" style="left:443px;top:665px;width:15px;height:17px"></div><svg class="i" style="left:446px;top:718px;width:9px;height:9px"><use href="#dn"/></svg>
<div class="th" style="left:18px;top:732px;width:341px;height:15px"></div>
<svg class="i" style="left:5px;top:735px;width:9px;height:9px"><use href="#lf"/></svg><svg class="i" style="left:429px;top:735px;width:9px;height:9px"><use href="#rt"/></svg>

<div class="a" style="left:1px;top:751px;width:458px;height:150px;background:#fff;border:1px solid #a8a8a8;box-sizing:border-box"></div>
<div class="hd" style="left:10px;top:760px;width:440px;height:19px">Fault Status Registers</div>
<div class="t" style="left:20px;top:787px">Name</div><div class="t" style="left:123px;top:787px">Value</div><div class="t" style="left:227px;top:787px">Description</div>
<div class="a" style="left:116px;top:783px;width:1px;height:111px;background:#e8e8e8"></div><div class="a" style="left:219px;top:783px;width:1px;height:111px;background:#e8e8e8"></div><div class="a" style="left:427px;top:783px;width:1px;height:111px;background:#e8e8e8"></div>
<div class="a" style="left:430px;top:783px;width:16px;height:111px;background:#f0f0f0"></div><div class="th" style="left:430px;top:799px;width:15px;height:39px"></div>
<svg class="i" style="left:433px;top:786px;width:9px;height:9px"><use href="#up"/></svg><svg class="i" style="left:433px;top:881px;width:9px;height:9px"><use href="#dn"/></svg>
<div class="a" style="left:0;top:805px;width:425px;height:89px;overflow:hidden">
<div class="t b" style="left:20px;top:4px">IPSR</div><div class="t" style="left:123px;top:4px">0x00000003</div><div class="t ti" style="left:227px;top:4px">Exception Status Register (Hard Fa...</div>
<div class="t b" style="left:20px;top:23px">CFSR</div><div class="t" style="left:123px;top:23px">0x00020510</div><div class="t ti" style="left:227px;top:23px">Configurable fault Status Register</div>
<div class="t b" style="left:20px;top:42px">MMSR</div><div class="t" style="left:123px;top:42px">0x00000010</div><div class="t ti" style="left:227px;top:42px">Memory Manage fault Status Regis...</div>
<div class="t b" style="left:20px;top:61px">BFSR</div><div class="t" style="left:123px;top:61px">0x00000005</div><div class="t ti" style="left:227px;top:61px">Bus fault Status Register</div>
<div class="t b" style="left:20px;top:80px">UFSR</div><div class="t" style="left:123px;top:80px">0x00000002</div><div class="t ti" style="left:227px;top:80px">User fault Status Register</div>
</div>

<div class="a" style="left:1px;top:905px;width:458px;height:149px;background:#fff;border:1px solid #a8a8a8;box-sizing:border-box"></div>
<div class="hd" style="left:10px;top:913px;width:440px;height:19px">Stacked Registers (LR/EXC_RETURN=0xfffffff1)</div>
<div class="t" style="left:20px;top:940px">Name</div><div class="t" style="left:123px;top:940px">Value</div><div class="t" style="left:227px;top:940px">Description</div>
<div class="a" style="left:116px;top:935px;width:1px;height:112px;background:#e8e8e8"></div><div class="a" style="left:219px;top:935px;width:1px;height:112px;background:#e8e8e8"></div><div class="a" style="left:427px;top:935px;width:1px;height:112px;background:#e8e8e8"></div>
<div class="a" style="left:430px;top:935px;width:16px;height:112px;background:#f0f0f0"></div><div class="th" style="left:430px;top:952px;width:15px;height:35px"></div>
<svg class="i" style="left:433px;top:939px;width:9px;height:9px"><use href="#up"/></svg><svg class="i" style="left:433px;top:1034px;width:9px;height:9px"><use href="#dn"/></svg>
<div class="a" style="left:0;top:958px;width:425px;height:89px;overflow:hidden">
<div class="t b" style="left:20px;top:3px">R0</div><div class="t" style="left:123px;top:3px">0x24E419B1</div>
<div class="t b" style="left:20px;top:22px">R1</div><div class="t" style="left:123px;top:22px">0xACAC2E8A</div>
<div class="t b" style="left:20px;top:41px">R2</div><div class="t" style="left:123px;top:41px">0xD91B180D</div>
<div class="t b" style="left:20px;top:60px">R3</div><div class="t" style="left:123px;top:60px">0x0F415683</div>
<div class="t b" style="left:20px;top:79px">R12</div><div class="t" style="left:123px;top:79px">0xF22339D0</div>
</div>

<!-- editor -->
<div class="a" style="left:464px;top:72px;width:895px;height:732px;background:#fff"></div>
<div class="a" style="left:464px;top:72px;width:895px;height:25px;background:#e9e9e9"></div>
<div class="a" style="left:999px;top:72px;width:138px;height:25px;background:#f5f5f5"></div>
<svg class="i" style="left:470px;top:77px"><use href="#cf"/></svg><div class="t" style="left:489px;top:77px;letter-spacing:-.3px">MIMXRT1024_P...</div>
<svg class="i" style="left:607px;top:77px"><use href="#cf"/></svg><div class="t" style="left:627px;top:77px">board.c</div>
<svg class="i" style="left:696px;top:77px"><use href="#cf"/></svg><div class="t" style="left:716px;top:77px">pin_mux.c</div>
<svg class="i" style="left:800px;top:77px"><use href="#cf"/></svg><div class="t" style="left:819px;top:77px;letter-spacing:.1px">clock_config.c</div>
<svg class="i" style="left:925px;top:77px"><use href="#cf"/></svg><div class="t" style="left:945px;top:77px">dcd.c</div>
<svg class="i" style="left:1003px;top:77px"><use href="#mp"/></svg><div class="t" style="left:1022px;top:77px;letter-spacing:-.3px">MIMXRT1024_P...</div><svg class="i" style="left:1116px;top:77px"><use href="#cx"/></svg>
<svg class="i" style="left:1142px;top:77px"><use href="#cf"/></svg><div class="t" style="left:1160px;top:77px">heap_4.c</div>
<div class="t b" style="left:1240px;top:74px;font-size:11px">»</div><div class="t" style="left:1247px;top:80px;font-size:10px">26</div>
<svg class="i" style="left:1312px;top:77px"><use href="#min"/></svg><svg class="i" style="left:1335px;top:77px"><use href="#max"/></svg>
<div class="a" style="left:464px;top:97px;width:12px;height:690px;background:#f8f8f8"></div>
<div class="a" style="left:524px;top:172px;width:805px;height:15px;background:#e8f2fe"></div>
<pre style="left:462px;top:98.500px;width:50.500px;text-align:right;color:#787878;height:689px;overflow:hidden">9974
9975
9976
9977
9978
9979
9980
9981
9982
9983
9984
9985
9986
9987
9988
9989
9990
9991
9992
9993
9994
9995
9996
9997
9998
9999
10000
10001
10002
10003
10004
10005
10006
10007
10008
10009
10010
10011
10012
10013
10014
10015
10016
10017
10018
10019</pre>
<pre style="left:531.700px;top:98.500px;width:797px;height:689px;overflow:hidden;color:#000">               0x80000000                __vectors_start__ = ABSOLUTE (.)
*(SORT_BY_ALIGNMENT(.isr_vector))
.isr_vector    0x80000000      0x278 ./startup/startup_mimxrt1024.o
               0x80000000                g_pfnVectors
               0x80000000                __Vectors
               0x80000278                . = ALIGN (0x4)
               0x80000278                __section_table_start = .
               0x80000278                __data_section_table = .
               0x80000278        0x4 LONG 0x80007bec LOADADDR (.data)
               0x8000027c        0x4 LONG 0x80007bec ADDR (.data)
               0x80000280        0x4 LONG 0x118 SIZEOF (.data)
               0x80000284        0x4 LONG 0x80007bec LOADADDR (.data_RAM2)
               0x80000288        0x4 LONG 0x20000000 ADDR (.data_RAM2)
               0x8000028c        0x4 LONG 0x0 SIZEOF (.data_RAM2)
               0x80000290        0x4 LONG 0x80007bec LOADADDR (.data_RAM3)
               0x80000294        0x4 LONG 0x0 ADDR (.data_RAM3)
               0x80000298        0x4 LONG 0x0 SIZEOF (.data_RAM3)
               0x8000029c        0x4 LONG 0x80007bec LOADADDR (.data_RAM4)
               0x800002a0        0x4 LONG 0x20200000 ADDR (.data_RAM4)
               0x800002a4        0x4 LONG 0x0 SIZEOF (.data_RAM4)
               0x800002a8        0x4 LONG 0x80007bec LOADADDR (.data_RAM5)
               0x800002ac        0x4 LONG 0x81e00000 ADDR (.data_RAM5)
               0x800002b0        0x4 LONG 0x0 SIZEOF (.data_RAM5)
               0x800002b4                __data_section_table_end = .
               0x800002b4                __bss_section_table = .
               0x800002b4        0x4 LONG 0x80007d04 ADDR (.bss)
               0x800002b8        0x4 LONG 0x2c24 SIZEOF (.bss)
               0x800002bc        0x4 LONG 0x20000000 ADDR (.bss_RAM2)
               0x800002c0        0x4 LONG 0x0 SIZEOF (.bss_RAM2)
               0x800002c4        0x4 LONG 0x0 ADDR (.bss_RAM3)
               0x800002c8        0x4 LONG 0x0 SIZEOF (.bss_RAM3)
               0x800002cc        0x4 LONG 0x20200000 ADDR (.bss_RAM4)
               0x800002d0        0x4 LONG 0x0 SIZEOF (.bss_RAM4)
               0x800002d4        0x4 LONG 0x81e00000 ADDR (.bss_RAM5)
               0x800002d8        0x4 LONG 0x0 SIZEOF (.bss_RAM5)
               0x800002dc                __bss_section_table_end = .
               0x800002dc                __section_table_end = .
*(SORT_BY_ALIGNMENT(.after_vectors*))
.after_vectors.reset
               0x800002dc       0x54 ./startup/startup_mimxrt1024.o
               0x800002dc                ResetISR
.after_vectors.init_data
               0x80000330       0x1e ./startup/startup_mimxrt1024.o
               0x80000330                data_init
.after_vectors.init_bss
               0x8000034e       0x12 ./startup/startup_mimxrt1024.o</pre>
<div class="a" style="left:1329px;top:97px;width:16px;height:691px;background:#f0f0f0"></div>
<div class="th" style="left:1329px;top:559px;width:15px;height:16px"></div>
<svg class="i" style="left:1332px;top:101px;width:9px;height:9px"><use href="#up"/></svg><svg class="i" style="left:1332px;top:773px;width:9px;height:9px"><use href="#dn"/></svg>
<div class="a" style="left:464px;top:788px;width:895px;height:16px;background:#f0f0f0"></div>
<div class="a" style="left:464px;top:788px;width:62px;height:16px;background:#f6f6f6"></div>
<div class="th" style="left:539px;top:788px;width:334px;height:15px"></div>
<svg class="i" style="left:526px;top:791px;width:9px;height:9px"><use href="#lf"/></svg><svg class="i" style="left:1315px;top:791px;width:9px;height:9px"><use href="#rt"/></svg>

<!-- disassembly panel -->
<div class="a" style="left:1363px;top:72px;width:482px;height:25px;background:#e9e9e9"></div>
<div class="a" style="left:1563px;top:72px;width:72px;height:25px;background:#f5f5f5"></div>
<svg class="i" style="left:1367px;top:77px"><use href="#vr"/></svg><div class="t" style="left:1390px;top:77px">V...</div>
<svg class="i" style="left:1418px;top:77px"><use href="#bp"/></svg><div class="t" style="left:1437px;top:77px">B...</div>
<svg class="i" style="left:1465px;top:77px"><use href="#ol"/></svg><div class="t" style="left:1486px;top:77px">O...</div>
<svg class="i" style="left:1517px;top:77px"><use href="#mod"/></svg><div class="t" style="left:1537px;top:77px">M...</div>
<svg class="i" style="left:1568px;top:77px"><use href="#dsb"/></svg><div class="t" style="left:1588px;top:77px">Di...</div><svg class="i" style="left:1613px;top:77px"><use href="#cx"/></svg>
<svg class="i" style="left:1638px;top:77px"><use href="#exp"/></svg><div class="t" style="left:1658px;top:77px">E...</div>
<svg class="i" style="left:1685px;top:77px"><use href="#vr"/></svg><div class="t" style="left:1707px;top:77px">Gl...</div>
<svg class="i" style="left:1735px;top:77px"><use href="#vr"/></svg><div class="t" style="left:1757px;top:77px">H...</div>
<svg class="i" style="left:1798px;top:77px"><use href="#min"/></svg><svg class="i" style="left:1822px;top:77px"><use href="#max"/></svg>

<div class="a" style="left:1363px;top:97px;width:482px;height:712px;background:#f0f0f0"></div>
<div class="a" style="left:1496px;top:98px;width:169px;height:21px;background:#fff;border-left:1px solid #808080;border-right:1px solid #808080;box-sizing:border-box"></div>
<div class="t" style="left:1502px;top:100px;font-size:12px">Enter location here</div>
<svg class="i" style="left:1651px;top:104px;width:10px;height:10px"><use href="#tv"/></svg>
<div class="a" style="left:1670px;top:99px;width:1px;height:19px;background:#999"></div>
<svg class="i" style="left:1678px;top:100px"><use href="#sync"/></svg><svg class="i" style="left:1702px;top:100px"><use href="#hom"/></svg>
<div class="a" style="left:1722px;top:98px;width:22px;height:21px;background:#cde4f7;border:1px solid #99d1ff;box-sizing:border-box"></div><div class="a" style="left:1745px;top:98px;width:22px;height:21px;background:#cde4f7;border:1px solid #99d1ff;box-sizing:border-box"></div>
<svg class="i" style="left:1725px;top:100px"><use href="#swp"/></svg><svg class="i" style="left:1748px;top:100px"><use href="#sd"/></svg>
<div class="a" style="left:1770px;top:99px;width:1px;height:19px;background:#999"></div>
<svg class="i" style="left:1778px;top:100px"><use href="#new"/></svg><svg class="i" style="left:1802px;top:100px"><use href="#pin"/></svg><svg class="i" style="left:1825px;top:100px"><use href="#dots"/></svg>
<div class="a" style="left:1376px;top:121px;width:439px;height:665px;background:#fff"></div>
<div class="a" style="left:1446px;top:121px;width:1px;height:665px;background:#ececec"></div>
<div class="a" style="left:1449px;top:122px;width:112px;height:15px;background:#c5dcaa"></div>
<svg class="i" style="left:1364px;top:124px;width:11px;height:11px"><use href="#arr"/></svg>
<pre style="left:1376px;top:122.500px;color:#006400;height:663px;overflow:hidden">800005f6:
800005f8:
55
800005fa:
800005fc:
56
800005fe:
80000600:
57
80000602:
80000604:
60
80000606:
80000608:
63
8000060a:
8000060c:
8000060e:
65
80000610:
80000612:
80000614:
80000616:
80000618:
8000061a:
8000061c:
8000061e:
80000620:
80000622:
80000624:
73
80000626:
80000628:
8000062a:
76
8000062c:
8000062e:
79
80000630:
80000632:
80000634:
80000636:
80000638:
8000063a:</pre>
<pre style="left:1463px;top:122.500px;width:350px;height:663px;overflow:hidden;color:#000080">movs    r0, r0
movs    r0, r0
<span style="color:#000">  BOARD_InitBootPins();</span>
movs    r0, r0
movs    r0, r0
<span style="color:#000">  BOARD_InitBootClocks();</span>
movs    r0, r0
movs    r0, r0
<span style="color:#000">  BOARD_InitBootPeripherals();</span>
movs    r0, r0
movs    r0, r0
<span style="color:#000">  BOARD_InitDebugConsole();</span>
movs    r0, r0
movs    r0, r0
<span style="color:#000">  PRINTF(<span style="color:#2a00ff">"Hello World\r\n"</span>);</span>
movs    r0, r0
movs    r0, r0
movs    r0, r0
<span style="color:#000">  xTaskCreate( MyTask, <span style="color:#3f7f7f">/* pointer to the task */</span></span>
movs    r0, r0
movs    r0, r0
movs    r0, r0
movs    r0, r0
movs    r0, r0
movs    r0, r0
movs    r0, r0
movs    r0, r0
movs    r0, r0
movs    r0, r0
movs    r0, r0
<span style="color:#000">  PRINTF( <span style="color:#2a00ff">"-- Starting --\r\n"</span> );</span>
movs    r0, r0
movs    r0, r0
movs    r0, r0
<span style="color:#000">  vTaskStartScheduler();</span>
movs    r0, r0
movs    r0, r0
<span style="color:#000">      <span style="color:#7f0055">__asm</span>( <span style="color:#2a00ff">"NOP"</span> ); <span style="color:#3f7f7f">/* something to use as a breakpoint */</span></span>
movs    r0, r0
movs    r0, r0
movs    r0, r0
movs    r0, r0
movs    r0, r0
movs    r0, r0</pre>
<div class="th" style="left:1815px;top:153px;width:15px;height:340px"></div>
<svg class="i" style="left:1818px;top:126px;width:9px;height:9px"><use href="#up"/></svg><svg class="i" style="left:1818px;top:772px;width:9px;height:9px"><use href="#dn"/></svg>
<div class="a" style="left:1364px;top:786px;width:83px;height:16px;background:#f6f6f6"></div>
<div class="th" style="left:1464px;top:786px;width:214px;height:15px"></div>
<svg class="i" style="left:1451px;top:789px;width:9px;height:9px"><use href="#lf"/></svg><svg class="i" style="left:1802px;top:789px;width:9px;height:9px"><use href="#rt"/></svg>
<div class="o" style="left:1359px;top:93px;width:480px;height:716px"></div>

<!-- bottom panel -->
<div class="a" style="left:464px;top:809px;width:1381px;height:244px;background:#fff;border-bottom:1px solid #d8d8d8;border-left:1px solid #d8d8d8;box-sizing:border-box"></div>
<div class="a" style="left:464px;top:809px;width:1381px;height:26px;background:#e9e9e9"></div>
<div class="a" style="left:1112px;top:809px;width:95px;height:26px;background:#fff"></div>
<svg class="i" style="left:469px;top:814px"><use href="#con"/></svg><div class="t b" style="left:489px;top:815px;letter-spacing:-.2px">Console</div>
<svg class="i" style="left:541px;top:814px"><use href="#prb"/></svg><div class="t" style="left:561px;top:815px">Problems</div>
<svg class="i" style="left:622px;top:814px"><use href="#exe"/></svg><div class="t" style="left:641px;top:815px">Executables</div>
<svg class="i" style="left:714px;top:814px"><use href="#dbc"/></svg><div class="t" style="left:733px;top:815px">Debugger C...</div>
<svg class="i" style="left:817px;top:814px"><use href="#ins"/></svg><div class="t" style="left:836px;top:815px">Installed S...</div>
<svg class="i" style="left:913px;top:814px"><use href="#per2"/></svg><div class="t" style="left:933px;top:815px">Offline Peri...</div>
<svg class="i" style="left:1018px;top:814px"><use href="#ist"/></svg><div class="t" style="left:1038px;top:815px">Instruction...</div>
<svg class="i" style="left:1115px;top:814px"><use href="#mem"/></svg><div class="t" style="left:1135px;top:815px;letter-spacing:.3px">Memory</div><svg class="i" style="left:1185px;top:814px"><use href="#cx"/></svg>
<svg class="i" style="left:1210px;top:814px"><use href="#ff"/></svg><div class="t" style="left:1230px;top:815px">Tasks (Free...</div>
<svg class="i" style="left:1310px;top:814px"><use href="#srh"/></svg><div class="t" style="left:1330px;top:815px">Search</div>
<svg class="i" style="left:1375px;top:814px"><use href="#ff"/></svg><div class="t" style="left:1395px;top:815px">Task Notific...</div>
<svg class="i" style="left:1476px;top:814px"><use href="#ff"/></svg><div class="t" style="left:1496px;top:815px">Queues (Fre...</div>
<svg class="i" style="left:1580px;top:814px"><use href="#ff"/></svg><div class="t" style="left:1600px;top:815px">Timers (Fre...</div>
<svg class="i" style="left:1681px;top:814px"><use href="#ff"/></svg><div class="t" style="left:1701px;top:815px">Heap Usage...</div>
<svg class="i" style="left:1798px;top:814px"><use href="#min"/></svg><svg class="i" style="left:1821px;top:814px"><use href="#max"/></svg>
<div class="a" style="left:1700px;top:835px;width:22px;height:20px;background:#cde4f7;border:1px solid #99d1ff;box-sizing:border-box"></div>
<div class="a" style="left:1752px;top:835px;width:23px;height:20px;background:#cde4f7;border:1px solid #99d1ff;box-sizing:border-box"></div>
<div class="t b" style="left:1601px;top:835px;font:bold 7.500px/14px 'Liberation Mono',monospace;color:#344a66">1010</div><div class="t b" style="left:1624px;top:835px;font:bold 7.500px/14px 'Liberation Mono',monospace;color:#344a66">1010</div>
<svg class="i" style="left:1648px;top:836px"><use href="#per"/></svg><svg class="i" style="left:1671px;top:836px"><use href="#pin"/></svg><svg class="i" style="left:1702px;top:836px"><use href="#swp"/></svg><svg class="i" style="left:1732px;top:836px"><use href="#clp"/></svg><svg class="i" style="left:1756px;top:836px"><use href="#ybk"/></svg><svg class="i" style="left:1787px;top:836px"><use href="#stk"/></svg><svg class="i" style="left:1805px;top:837px"><use href="#tri"/></svg><svg class="i" style="left:1824px;top:836px"><use href="#dots"/></svg>

<div class="t" style="left:465px;top:857px;font-size:12px">Monitors</div>
<svg class="i" style="left:773px;top:860px"><use href="#plus"/></svg><svg class="i" style="left:797px;top:860px"><use href="#xx"/></svg><svg class="i" style="left:821px;top:860px"><use href="#xx2"/></svg>
<div class="a" style="left:464px;top:880px;width:380px;height:1px;background:#a8a8a8"></div>
<div class="a" style="left:482px;top:881px;width:90px;height:18px;background:#cde8ff"></div>
<svg class="i" style="left:485px;top:883px;width:14px;height:14px"><use href="#dia"/></svg><div class="t" style="left:508px;top:883px;letter-spacing:-.2px">0x80000000</div>

<!-- memory -->
<div class="a" style="left:845px;top:853px;width:1000px;height:200px;background:#fff"></div>
<div class="a" style="left:845px;top:857px;width:1000px;height:1px;background:#b0b0b0"></div>
<div class="a" style="left:845px;top:877px;width:1000px;height:1px;background:#a8a8a8"></div>
<div class="a" style="left:1075px;top:858px;width:1px;height:19px;background:#b0b0b0"></div><div class="a" style="left:1199px;top:858px;width:1px;height:19px;background:#b0b0b0"></div>
<div class="t" style="left:847px;top:861px;letter-spacing:-.1px">0x80000000 : 0x80000000 &lt;Traditional&gt;</div><svg class="i" style="left:1055px;top:860px"><use href="#cx"/></svg>
<svg class="i" style="left:1079px;top:860px"><use href="#plus"/></svg><div class="t" style="left:1100px;top:861px">New Renderings...</div>

<div class="mr" style="top:882px"><i>0x80000000</i><b>00000000</b><u>00000000</u><b>00000000</b><u>00000000</u><b>00000000</b><u>00000000</u><b>00000000</b><u>00000000</u><b>00000000</b><u>00000000</u></div>
<div class="mr" style="top:901px"><i>0x80000028</i><b>00000000</b><u>00000000</u><b>00000000</b><u>00000000</u><b>00000000</b><u>00000000</u><b>00000000</b><u>00000000</u><b>00000000</b><u>00000000</u></div>
<div class="mr" style="top:920px"><i>0x80000050</i><b>00000000</b><u>00000000</u><b>00000000</b><u>00000000</u><b>00000000</b><u>00000000</u><b>00000000</b><u>00000000</u><b>00000000</b><u>00000000</u></div>
<div class="mr" style="top:939px"><i>0x80000078</i><b>00000000</b><u>00000000</u><b>00000000</b><u>00000000</u><b>00000000</b><u>00000000</u><b>00000000</b><u>00000000</u><b>00000000</b><u>00000000</u></div>
<div class="mr" style="top:958px"><i>0x800000A0</i><b>00000000</b><u>00000000</u><b>00000000</b><u>00000000</u><b>00000000</b><u>00000000</u><b>00000000</b><u>00000000</u><b>00000000</b><u>00000000</u></div>
<div class="mr" style="top:977px"><i>0x800000C8</i><b>00000000</b><u>00000000</u><b>00000000</b><u>00000000</u><b>00000000</b><u>00000000</u><b>00000000</b><u>00000000</u><b>00000000</b><u>00000000</u></div>
<div class="mr" style="top:996px"><i>0x800000F0</i><b>00000000</b><u>00000000</u><b>00000000</b><u>00000000</u><b>00000000</b><u>00000000</u><b>00000000</b><u>00000000</u><b>00000000</b><u>00000000</u></div>
<div class="mr" style="top:1015px"><i>0x80000118</i><b>00000000</b><u>00000000</u><b>00000000</b><u>00000000</u><b>00000000</b><u>00000000</u><b>00000000</b><u>00000000</u><b>00000000</b><u>00000000</u></div>

<pre style="left:1548px;top:880px;font-size:11.650px;line-height:19px;width:280px;"><span style="color:#000">....</span><span style="color:#999">....</span><span style="color:#000">....</span><span style="color:#999">....</span><span style="color:#000">....</span><span style="color:#999">....</span><span style="color:#000">....</span><span style="color:#999">....</span><span style="color:#000">....</span><span style="color:#999">....</span>
<span style="color:#000">....</span><span style="color:#999">....</span><span style="color:#000">....</span><span style="color:#999">....</span><span style="color:#000">....</span><span style="color:#999">....</span><span style="color:#000">....</span><span style="color:#999">....</span><span style="color:#000">....</span><span style="color:#999">....</span>
<span style="color:#000">....</span><span style="color:#999">....</span><span style="color:#000">....</span><span style="color:#999">....</span><span style="color:#000">....</span><span style="color:#999">....</span><span style="color:#000">....</span><span style="color:#999">....</span><span style="color:#000">....</span><span style="color:#999">....</span>
<span style="color:#000">....</span><span style="color:#999">....</span><span style="color:#000">....</span><span style="color:#999">....</span><span style="color:#000">....</span><span style="color:#999">....</span><span style="color:#000">....</span><span style="color:#999">....</span><span style="color:#000">....</span><span style="color:#999">....</span>
<span style="color:#000">....</span><span style="color:#999">....</span><span style="color:#000">....</span><span style="color:#999">....</span><span style="color:#000">....</span><span style="color:#999">....</span><span style="color:#000">....</span><span style="color:#999">....</span><span style="color:#000">....</span><span style="color:#999">....</span>
<span style="color:#000">....</span><span style="color:#999">....</span><span style="color:#000">....</span><span style="color:#999">....</span><span style="color:#000">....</span><span style="color:#999">....</span><span style="color:#000">....</span><span style="color:#999">....</span><span style="color:#000">....</span><span style="color:#999">....</span>
<span style="color:#000">....</span><span style="color:#999">....</span><span style="color:#000">....</span><span style="color:#999">....</span><span style="color:#000">....</span><span style="color:#999">....</span><span style="color:#000">....</span><span style="color:#999">....</span><span style="color:#000">....</span><span style="color:#999">....</span>
<span style="color:#000">....</span><span style="color:#999">....</span><span style="color:#000">....</span><span style="color:#999">....</span><span style="color:#000">....</span><span style="color:#999">....</span><span style="color:#000">....</span><span style="color:#999">....</span><span style="color:#000">....</span><span style="color:#999">....</span></pre>
<div class="a" style="left:1827px;top:878px;width:14px;height:158px;background:#f0f0f0"></div>
<div class="th" style="left:1827px;top:948px;width:14px;height:17px"></div>
<svg class="i" style="left:1830px;top:882px;width:9px;height:9px"><use href="#up"/></svg><svg class="i" style="left:1830px;top:1022px;width:9px;height:9px"><use href="#dn"/></svg>
<div class="a" style="left:845px;top:1036px;width:1000px;height:17px;background:#f0f0f0"></div>
<div class="th" style="left:861px;top:1036px;width:933px;height:15px"></div>
<svg class="i" style="left:847px;top:1039px;width:9px;height:9px"><use href="#lf"/></svg><svg class="i" style="left:1814px;top:1039px;width:9px;height:9px"><use href="#rt"/></svg>
<div class="o" style="left:840px;top:848px;width:1005px;height:210px;border-right-width:3px"></div>

<!-- status -->
<div class="a" style="left:1283px;top:1060px;width:0;height:17px;border-left:2px dotted #c4c4c4"></div>
<svg class="i" style="left:1541px;top:1059px"><use href="#st"/></svg>
<div class="a" style="left:1569px;top:1060px;width:0;height:17px;border-left:2px dotted #c4c4c4"></div>
<svg class="i" style="left:1575px;top:1059px"><use href="#qs"/></svg>
<div class="t" style="left:1601px;top:1061px;color:#0a5fc4"><u>NXP</u> <u>MIMXRT1024xxxxx</u><span style="color:#1e1e1e">*</span> <span style="color:#1e1e1e">(</span><u>MIMXR...ject</u><span style="color:#1e1e1e">)</span></div>
</div></body></html>
